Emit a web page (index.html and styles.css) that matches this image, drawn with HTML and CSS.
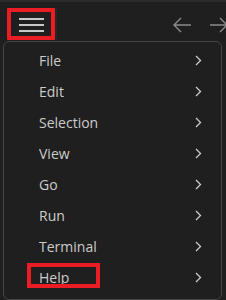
FILE: index.html
```html
<!DOCTYPE html>
<html>
<head>
<meta charset="utf-8">
<link rel="stylesheet" href="styles.css">
</head>
<body>
<div class="strip"></div>
<header class="titlebar">
  <div class="menu-btn">
    <span class="hl"></span><span class="hl"></span><span class="hl"></span>
  </div>
  <div class="nav">
    <svg class="arrow" width="20" height="16" viewBox="0 0 20 16"><path d="M19 8H2M9 1L2 8l7 7" fill="none" stroke="#8b8b8b" stroke-width="1.4"/></svg>
    <svg class="arrow" width="20" height="16" viewBox="0 0 20 16"><path d="M1 8h17M11 1l7 7-7 7" fill="none" stroke="#8b8b8b" stroke-width="1.4"/></svg>
  </div>
</header>
<ul class="menu">
  <li class="item"><span>File</span><svg class="chev" width="7" height="11" viewBox="0 0 7 11"><path d="M1 1l4.5 4.5L1 10" fill="none" stroke="#cccccc" stroke-width="1.3"/></svg></li>
  <li class="item"><span>Edit</span><svg class="chev" width="7" height="11" viewBox="0 0 7 11"><path d="M1 1l4.5 4.5L1 10" fill="none" stroke="#cccccc" stroke-width="1.3"/></svg></li>
  <li class="item"><span>Selection</span><svg class="chev" width="7" height="11" viewBox="0 0 7 11"><path d="M1 1l4.5 4.5L1 10" fill="none" stroke="#cccccc" stroke-width="1.3"/></svg></li>
  <li class="item"><span>View</span><svg class="chev" width="7" height="11" viewBox="0 0 7 11"><path d="M1 1l4.5 4.5L1 10" fill="none" stroke="#cccccc" stroke-width="1.3"/></svg></li>
  <li class="item"><span>Go</span><svg class="chev" width="7" height="11" viewBox="0 0 7 11"><path d="M1 1l4.5 4.5L1 10" fill="none" stroke="#cccccc" stroke-width="1.3"/></svg></li>
  <li class="item"><span>Run</span><svg class="chev" width="7" height="11" viewBox="0 0 7 11"><path d="M1 1l4.5 4.5L1 10" fill="none" stroke="#cccccc" stroke-width="1.3"/></svg></li>
  <li class="item"><span>Terminal</span><svg class="chev" width="7" height="11" viewBox="0 0 7 11"><path d="M1 1l4.5 4.5L1 10" fill="none" stroke="#cccccc" stroke-width="1.3"/></svg></li>
  <li class="item"><span>Help</span><svg class="chev" width="7" height="11" viewBox="0 0 7 11"><path d="M1 1l4.5 4.5L1 10" fill="none" stroke="#cccccc" stroke-width="1.3"/></svg><div class="mark"></div></li>
</ul>
</body>
</html>
```
FILE: styles.css
```css
html, body {
  margin: 0;
  padding: 0;
  background: #1f1f1f;
  width: 226px;
  height: 300px;
  overflow: hidden;
  font-family: "Open Sans", "Noto Sans", sans-serif;
}
.strip {
  height: 2px;
  background: #2b2b2b;
}
.titlebar {
  display: flex;
  align-items: flex-start;
  justify-content: space-between;
  height: 39px;
  padding-left: 7px;
  overflow: hidden;
}
.menu-btn {
  margin-top: 6px;
  width: 40px;
  height: 22px;
  padding-top: 2px;
  border: 4px solid #ec1c24;
  border-radius: 1px;
  background: #1f1f1f;
  box-shadow: 2px 0 0 0 #262626;
  display: flex;
  flex-direction: column;
  justify-content: center;
  align-items: center;
  gap: 4px;
}
.hl {
  display: block;
  width: 25px;
  height: 2px;
  background: #c8c8c8;
}
.nav {
  display: flex;
  flex-shrink: 0;
  gap: 17px;
  margin-top: 15px;
  margin-right: -3px;
}
.arrow {
  display: block;
  flex-shrink: 0;
}
.menu {
  list-style: none;
  margin: 0 0 0 3px;
  width: 217px;
  height: 254px;
  border: 1px solid #454545;
  border-radius: 6px;
  padding: 3px 0 0 0;
  box-sizing: content-box;
  background: #1f1f1f;
}
.item {
  position: relative;
  height: 31px;
  display: flex;
  align-items: center;
  justify-content: space-between;
  padding: 0 19px 0 35px;
  color: #cccccc;
  font-size: 14px;
}
.chev {
  display: block;
}
.mark {
  position: absolute;
  left: 23px;
  top: 1px;
  width: 65px;
  height: 17px;
  border: 4px solid #ec1c24;
}
```
